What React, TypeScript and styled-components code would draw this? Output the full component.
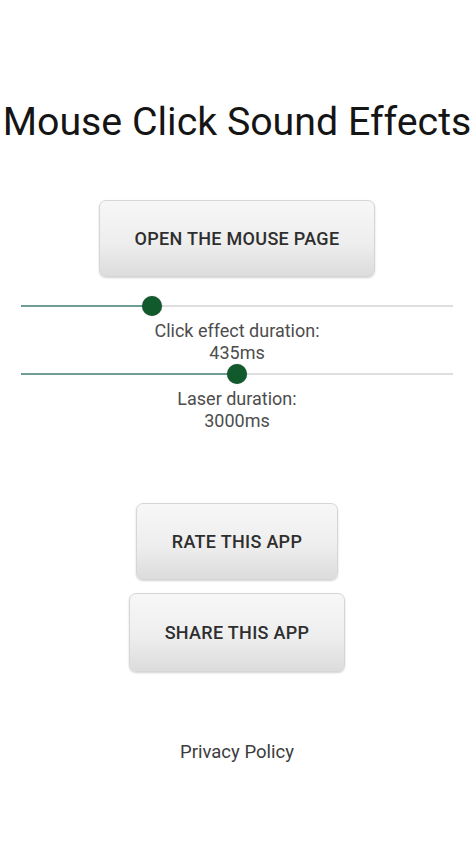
import React from "react";
import styled, { createGlobalStyle } from "styled-components";

const GlobalStyle = createGlobalStyle`
  html, body {
    margin: 0;
    padding: 0;
    background: #ffffff;
    font-family: Roboto, "Noto Sans", "Liberation Sans", sans-serif;
  }
`;

const Screen = styled.div`
  width: 474px;
  min-height: 845px;
  display: flex;
  flex-direction: column;
  align-items: center;
  padding-top: 98px;
  box-sizing: border-box;
`;

const Title = styled.h1`
  margin: 0;
  font-size: 39.3px;
  line-height: 48px;
  font-weight: 400;
  color: #151515;
  white-space: nowrap;
`;

const Button = styled.button<{ $mt: number; $h?: number }>`
  margin-top: ${(p) => p.$mt}px;
  height: ${(p) => p.$h ?? 77}px;
  padding: 0 35px;
  border: 1px solid #d6d6d6;
  border-radius: 7px;
  background: linear-gradient(#f7f7f7 0%, #eeeeee 55%, #dcdcdc 100%);
  box-shadow: 0 1px 2px rgba(0, 0, 0, 0.18);
  font-family: Roboto, "Noto Sans", "Liberation Sans", sans-serif;
  font-size: 18px;
  font-weight: 500;
  letter-spacing: 0.3px;
  color: #2e2e2e;
  cursor: pointer;
`;

const SliderBlock = styled.div<{ $mt: number }>`
  margin-top: ${(p) => p.$mt}px;
  width: 100%;
  display: flex;
  flex-direction: column;
  align-items: center;
`;

const Track = styled.div`
  position: relative;
  box-sizing: border-box;
  width: 432px;
  height: 20px;
  display: flex;
  align-items: center;
`;

const Rail = styled.div`
  width: 100%;
  height: 2px;
  background: #dedede;
  display: flex;
`;

const Fill = styled.div`
  height: 100%;
  background: #6f9c95;
`;

const Thumb = styled.div`
  position: absolute;
  top: 0;
  width: 20px;
  height: 20px;
  margin-left: -10px;
  border-radius: 50%;
  background: #115a2b;
  box-shadow: 0 0 1px rgba(0, 0, 0, 0.4);
`;

const Caption = styled.div`
  margin-top: 4px;
  font-size: 18px;
  line-height: 22px;
  color: #4d4d4d;
  text-align: center;
`;

const PrivacyLink = styled.a`
  margin-top: 68px;
  font-size: 18.5px;
  line-height: 24px;
  color: #3c3c3c;
  text-decoration: none;
`;

type SliderProps = {
  value: number;
  max: number;
  label: string;
  unit: string;
  mt: number;
};

function DurationSlider({ value, max, label, unit, mt }: SliderProps) {
  const pct = (value / max) * 100;
  return (
    <SliderBlock $mt={mt}>
      <Track>
        <Rail>
          <Fill style={{ width: `${pct}%` }} />
        </Rail>
        <Thumb style={{ left: `${pct}%` }} />
      </Track>
      <Caption>
        {label}
        <br />
        {value}
        {unit}
      </Caption>
    </SliderBlock>
  );
}

export default function App() {
  return (
    <>
      <GlobalStyle />
      <Screen>
        <Title>Mouse Click Sound Effects</Title>
        <Button $mt={54}>OPEN THE MOUSE PAGE</Button>
        <DurationSlider value={435} max={1440} label="Click effect duration:" unit="ms" mt={19} />
        <DurationSlider value={3000} max={6000} label="Laser duration:" unit="ms" mt={0} />
        <Button $mt={71}>RATE THIS APP</Button>
        <Button $mt={13} $h={79}>SHARE THIS APP</Button>
        <PrivacyLink href="#">Privacy Policy</PrivacyLink>
      </Screen>
    </>
  );
}
